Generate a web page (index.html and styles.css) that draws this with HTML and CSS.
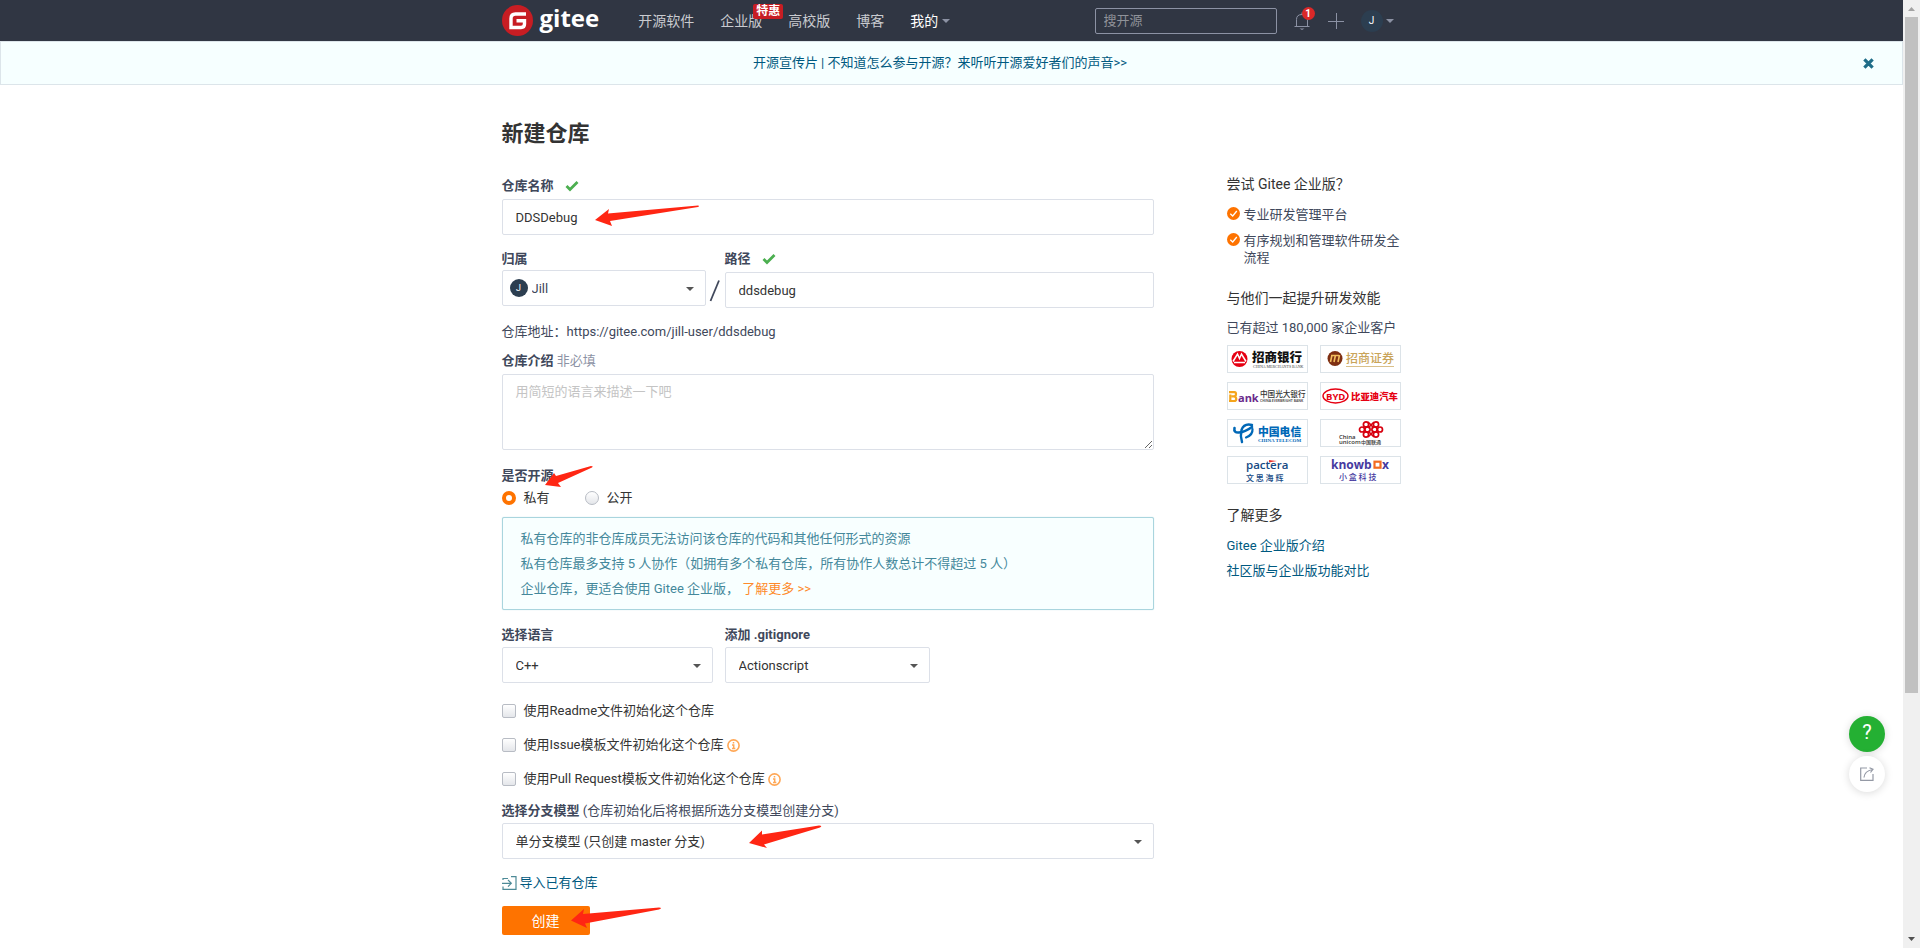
FILE: index.html
```
<!DOCTYPE html>
<html lang="zh-CN">
<head>
    <meta charset="UTF-8">
    <meta name="viewport" content="width=device-width, initial-scale=1.0">
    <title>新建仓库 - Gitee</title>
    <link rel="stylesheet" href="styles.css">
</head>
<body>
    <div class="page">
        <header class="navbar">
            <div class="container nav-inner">
                <a class="logo" href="#">
                    <svg width="31" height="31" viewBox="0 0 31 31">
                        <circle cx="15.5" cy="15.5" r="15.5" fill="#c71d23"/>
                        <path d="M24 9H13.5Q9 9 9 13.5V22.500H19Q22.500 22.500 22.500 19V15.700H14.500" fill="none" stroke="#fff" stroke-width="3.400"/>
                    </svg>
                    <span>gitee</span>
                </a>
                <nav class="nav-links">
                    <a href="#">开源软件</a>
                    <a class="promo" href="#">企业版<span class="promo-tag">特惠</span></a>
                    <a href="#">高校版</a>
                    <a href="#">博客</a>
                    <a class="mine" href="#">我的<i class="caret"></i></a>
                </nav>
                <div class="nav-tools">
                    <input class="search" type="text" placeholder="搜开源" aria-label="搜开源">
                    <a class="bell" href="#" aria-label="通知">
                        <svg width="16" height="20" viewBox="0 0 16 20" fill="none" stroke="#8c92a4">
                            <path d="M.5 15.500H15.500M2.500 15.500V8.500Q2.500 3.500 8 3.500Q13.500 3.500 13.500 8.500V15.500M8 3.500V1.500"/>
                            <path d="M5.500 17.500H10.500L8 19Z" fill="#8c92a4" stroke="none"/>
                        </svg>
                        <span class="bell-count">1</span>
                    </a>
                    <a class="plus" href="#" aria-label="新建">
                        <svg width="16" height="16" viewBox="0 0 16 16" stroke="#8c92a4"><path d="M8.500 0V16M0 8.500H16"/></svg>
                    </a>
                    <a class="user" href="#"><span class="avatar avatar-nav">J</span><i class="caret"></i></a>
                </div>
            </div>
        </header>

        <div class="notice">
            <a href="#">开源宣传片 | 不知道怎么参与开源？来听听开源爱好者们的声音&gt;&gt;</a>
            <button class="notice-close" type="button" aria-label="关闭">
                <svg width="11" height="11" viewBox="0 0 12 12" stroke="#1f6d88" stroke-width="3.500"><path d="M1.500 1.500L10.500 10.500M10.500 1.500L1.500 10.500"/></svg>
            </button>
        </div>

        <main class="container content">
            <form class="repo-form">
                <h1>新建仓库</h1>

                <div class="field name-field">
                    <label for="name">仓库名称
                        <svg class="check" width="14" height="12" viewBox="0 0 14 12"><path d="M1.500 6L5 9.500L12.500 2" fill="none" stroke="#4caf50" stroke-width="2.800"/></svg>
                    </label>
                    <input id="name" type="text" value="DDSDebug">
                </div>

                <div class="path-row">
                    <div class="field owner-field">
                        <label for="owner">归属</label>
                        <div class="select-box">
                            <span class="avatar avatar-owner">J</span>
                            <select id="owner"><option>Jill</option></select>
                        </div>
                    </div>
                    <svg class="slash" width="19" height="36" viewBox="0 0 19 36"><path d="M4.500 29L13 8.500" stroke="#40485b" stroke-width="1.800"/></svg>
                    <div class="field path-field">
                        <label for="path">路径
                            <svg class="check" width="14" height="12" viewBox="0 0 14 12"><path d="M1.500 6L5 9.500L12.500 2" fill="none" stroke="#4caf50" stroke-width="2.800"/></svg>
                        </label>
                        <input id="path" type="text" value="ddsdebug">
                    </div>
                </div>

                <p class="address">仓库地址：https://gitee.com/jill-user/ddsdebug</p>

                <div class="field desc-field">
                    <label for="desc">仓库介绍 <small>非必填</small></label>
                    <textarea id="desc" placeholder="用简短的语言来描述一下吧"></textarea>
                </div>

                <div class="visibility">
                    <strong>是否开源</strong>
                    <div class="radios">
                        <label><input type="radio" name="visibility" checked>私有</label>
                        <label><input type="radio" name="visibility">公开</label>
                    </div>
                </div>

                <div class="tips">
                    <p>私有仓库的非仓库成员无法访问该仓库的代码和其他任何形式的资源</p>
                    <p>私有仓库最多支持 5 人协作（如拥有多个私有仓库，所有协作人数总计不得超过 5 人）</p>
                    <p>企业仓库，更适合使用 Gitee 企业版， <a href="#">了解更多 &gt;&gt;</a></p>
                </div>

                <div class="lang-row">
                    <div class="field lang-field">
                        <label for="lang">选择语言</label>
                        <div class="select-box"><select id="lang"><option>C++</option></select></div>
                    </div>
                    <div class="field ignore-field">
                        <label for="ignore">添加 .gitignore</label>
                        <div class="select-box"><select id="ignore"><option>Actionscript</option></select></div>
                    </div>
                </div>

                <div class="checks">
                    <label><input type="checkbox">使用Readme文件初始化这个仓库</label>
                    <label><input type="checkbox">使用Issue模板文件初始化这个仓库
                        <svg class="info" width="13" height="13" viewBox="0 0 13 13"><circle cx="6.500" cy="6.500" r="5.600" fill="none" stroke="#ffa857" stroke-width="1.600"/><path d="M6.500 3V4.500M5 6H6.700V9.500M5 9.500H8.300" fill="none" stroke="#ffa857" stroke-width="1.500"/></svg>
                    </label>
                    <label><input type="checkbox">使用Pull Request模板文件初始化这个仓库
                        <svg class="info" width="13" height="13" viewBox="0 0 13 13"><circle cx="6.500" cy="6.500" r="5.600" fill="none" stroke="#ffa857" stroke-width="1.600"/><path d="M6.500 3V4.500M5 6H6.700V9.500M5 9.500H8.300" fill="none" stroke="#ffa857" stroke-width="1.500"/></svg>
                    </label>
                </div>

                <div class="field branch-field">
                    <label for="branch">选择分支模型 <span>(仓库初始化后将根据所选分支模型创建分支)</span></label>
                    <div class="select-box"><select id="branch"><option>单分支模型 (只创建 master 分支)</option></select></div>
                </div>

                <a class="import" href="#">
                    <svg width="15" height="14" viewBox="0 0 15 14" fill="none" stroke="#4d8a97" stroke-width="1.200"><path d="M1 4V2.500H6M9 .6H14V13.400H1V10.500M0 7.300H9M6 4L9.300 7.300L6 10.600"/></svg>
                    导入已有仓库
                </a>
                <button class="submit" type="submit">创建</button>
            </form>

            <aside class="sidebar">
                <h2>尝试 Gitee 企业版？</h2>
                <ul class="features">
                    <li><svg width="13" height="13" viewBox="0 0 13 13"><circle cx="6.500" cy="6.500" r="6.500" fill="#fe7300"/><path d="M3.300 6.800L5.700 9L9.800 4" fill="none" stroke="#fff" stroke-width="1.300"/></svg>专业研发管理平台</li>
                    <li><svg width="13" height="13" viewBox="0 0 13 13"><circle cx="6.500" cy="6.500" r="6.500" fill="#fe7300"/><path d="M3.300 6.800L5.700 9L9.800 4" fill="none" stroke="#fff" stroke-width="1.300"/></svg>有序规划和管理软件研发全流程</li>
                </ul>
                <h2>与他们一起提升研发效能</h2>
                <p>已有超过 180,000 家企业客户</p>
                <div class="customers">
                    <svg viewBox="0 0 79 26">
                        <circle cx="11.500" cy="13" r="8" fill="#e60012"/>
                        <path d="M5 15.500L9.500 8L11.500 12.500L13.500 8L18 15.500M6 16.500H17" fill="none" stroke="#fff" stroke-width="1.500"/>
                        <text class="cjk heavy" x="24" y="16" font-size="12.500" fill="#111">招商银行</text>
                        <text class="serif" x="25" y="22" font-size="4" fill="#444">CHINA MERCHANTS BANK</text>
                    </svg>
                    <svg viewBox="0 0 79 26">
                        <circle cx="14" cy="12.500" r="7.500" fill="#7e2f12"/>
                        <path d="M9.500 16L11 9M13 16L14.500 9M17 16L18.500 9M10 9.500H18" fill="none" stroke="#f2bd5e" stroke-width="1.600"/>
                        <text class="cjk" x="25" y="17" font-size="12" fill="#c9a45a">招商证券</text>
                        <path d="M25 20.500H73" stroke="#d9c08a"/>
                    </svg>
                    <svg viewBox="0 0 79 26">
                        <path d="M1 9.200H6.500Q8 9.200 8 11Q8 13.300 6 13.300H3.500M6 13.300Q8.300 14 8.300 16Q8.300 18 6 18H1M2.300 11.500V18" fill="none" stroke="#f5a51b" stroke-width="2.200"/>
                        <text class="latin" x="10" y="19" font-size="11" fill="#6b2a8c">ank</text>
                        <text class="cjk" x="32" y="14" font-size="7.600" fill="#333">中国光大银行</text>
                        <text class="latin" x="32" y="19" font-size="3.400" fill="#555">CHINA EVERBRIGHT BANK</text>
                    </svg>
                    <svg viewBox="0 0 79 26">
                        <ellipse cx="14.500" cy="13" rx="12.500" ry="7" fill="none" stroke="#e60012" stroke-width="1.400"/>
                        <text class="latin" x="5" y="16.500" font-size="9.500" fill="#e60012">BYD</text>
                        <text class="cjk heavy" x="30" y="16.500" font-size="9.400" fill="#e60012">比亚迪汽车</text>
                    </svg>
                    <svg viewBox="0 0 79 26">
                        <g fill="none" stroke="#0068b7" stroke-linecap="round">
                            <path d="M6.500 8Q5.500 13 11 12.500Q17 12 24 7" stroke-width="2.600"/>
                            <path d="M24 5Q16 3 13.500 10Q12 16 14 22" stroke-width="2.400"/>
                            <path d="M24.500 9Q25 15 18 17.500" stroke-width="2.200"/>
                        </g>
                        <text class="cjk heavy" x="30" y="15.500" font-size="10.800" fill="#0068b7">中国电信</text>
                        <text class="serif heavy" x="30" y="22" font-size="5" fill="#0068b7">CHINA TELECOM</text>
                    </svg>
                    <svg viewBox="0 0 79 26">
                        <g fill="none" stroke="#d7000f" stroke-width="1.700">
                            <circle cx="45" cy="4.500" r="2.600"/><circle cx="55" cy="4.500" r="2.600"/>
                            <circle cx="41" cy="9.500" r="2.500"/><circle cx="46.500" cy="9.500" r="2.600"/><circle cx="53.500" cy="9.500" r="2.600"/><circle cx="59" cy="9.500" r="2.500"/>
                            <circle cx="45" cy="14.500" r="2.600"/><circle cx="55" cy="14.500" r="2.600"/>
                            <path d="M47 2L53 8M53 2L47 8M47 11L53 17M53 11L47 17"/>
                        </g>
                        <text class="latin thin" x="18" y="18.500" font-size="6" fill="#333">China</text>
                        <text class="latin thin" x="18" y="24" font-size="6" fill="#333">unicom</text>
                        <text class="cjk" x="40" y="24" font-size="5" fill="#333">中国联通</text>
                    </svg>
                    <svg viewBox="0 0 79 26">
                        <text class="latin thin" x="18" y="12" font-size="11.500" fill="#164a84">pactera</text>
                        <path d="M41 3L49 4L41 5.500Z" fill="#e5322d"/>
                        <text class="cjk" x="18" y="23.500" font-size="8" fill="#164a84">文 思 海 辉</text>
                    </svg>
                    <svg viewBox="0 0 79 26">
                        <text class="latin" x="10" y="12" font-size="12" fill="#463aa0">knowb</text>
                        <rect x="53.500" y="4.700" width="6" height="6" fill="none" stroke="#f36b21" stroke-width="2.200"/>
                        <text class="latin" x="61" y="12" font-size="12" fill="#463aa0">x</text>
                        <text class="cjk" x="18" y="23" font-size="8" fill="#463aa0">小 盒 科 技</text>
                    </svg>
                </div>
                <h2>了解更多</h2>
                <a href="#">Gitee 企业版介绍</a>
                <a href="#">社区版与企业版功能对比</a>
            </aside>

            <!-- step arrows, drawn over the form -->
            <svg class="arrows" width="200" height="760" viewBox="0 0 200 760" fill="#ff2613">
                <path d="M93 35L107 24L106 28.500L196 20.500Q198 21 196 22L108 36L110 41Z"/>
                <path d="M43 300L52 288L54 291L89 281Q92 281 90 282.500L56 298L59 302Z"/>
                <path d="M247 658L260 645.500L260 649.500L317 640.500Q321 640.500 318 642.500L262 659.500L265 663Z"/>
                <path d="M69 735.500L82 724L81 729L157 722.500Q161 723 157 724.500L83 738.500L85 743Z"/>
            </svg>
        </main>

        <div class="float-tools">
            <button class="help" type="button">?</button>
            <button class="share" type="button" aria-label="反馈">
                <svg width="14" height="14" viewBox="0 0 14 14" fill="none" stroke="#9499a5" stroke-width="1.200"><path d="M7 1H.7V13.300H13V7M4 10.500Q4.500 4 12.500 2.500M9.500 .7L13 2.300L10.500 5.500"/></svg>
            </button>
        </div>
    </div>

    <div class="scrollbar">
        <svg width="17" height="17" viewBox="0 0 17 17"><path d="M5 11L8.500 7L12 11Z" fill="#a3a3a3"/></svg>
        <div class="scroll-track"><div class="scroll-thumb"></div></div>
        <svg width="17" height="17" viewBox="0 0 17 17"><path d="M5 6L8.500 10L12 6Z" fill="#505050"/></svg>
    </div>
</body>
</html>
```
FILE: styles.css
```
* {
    box-sizing: border-box;
}
body {
    display: flex;
    height: 100vh;
    margin: 0;
    overflow: hidden;
    font-family: Roboto, "Noto Sans CJK SC", sans-serif;
    font-size: 13px;
    line-height: 20px;
    color: #40485b;
    background: #fff;
}
h1, h2, p, ul {
    margin: 0;
    padding: 0;
}
a {
    color: #005980;
    text-decoration: none;
}
input, select, textarea, button {
    font-family: inherit;
    font-size: 13px;
}
svg {
    flex: none;
}
.page {
    position: relative;
    flex: 1;
    overflow: hidden;
}
.container {
    max-width: 900px;
    margin: 0 auto;
}

/* top bar */
.navbar {
    background: #303643;
}
.nav-inner {
    display: flex;
    align-items: center;
    height: 41px;
}
.logo {
    display: flex;
    align-items: center;
    gap: 7px;
    color: #fff;
    font-family: "Open Sans", sans-serif;
    font-size: 24px;
    font-weight: bold;
}
.logo span {
    padding-bottom: 6px;
}
.nav-links {
    display: flex;
    flex: 1;
    gap: 26px;
    margin-left: 39px;
    font-size: 14px;
}
.nav-links a {
    color: #c9cbd0;
}
.nav-links .mine {
    display: flex;
    align-items: center;
    gap: 4px;
    color: #fff;
}
.promo {
    position: relative;
}
.promo-tag {
    position: absolute;
    top: -7px;
    left: 33px;
    padding: 0 3px;
    border-radius: 2px;
    background: #c71d23;
    color: #fff;
    font-size: 12px;
    font-weight: bold;
    line-height: 15px;
    white-space: nowrap;
}
.caret {
    border: 4px solid transparent;
    border-top-color: #8c92a4;
    border-bottom: 0;
}
.nav-tools {
    display: flex;
    align-items: center;
}
.search {
    width: 182px;
    height: 26px;
    padding: 0 8px;
    border: 1px solid #8c92a4;
    border-radius: 2px;
    background: transparent;
    color: #fff;
}
.search::placeholder {
    color: #8f9299;
}
.bell {
    position: relative;
    display: flex;
    margin-left: 17px;
}
.bell-count {
    position: absolute;
    top: -4px;
    left: 8px;
    width: 13px;
    border-radius: 7px;
    background: #db2828;
    color: #fff;
    font-size: 10px;
    font-weight: bold;
    line-height: 13px;
    text-align: center;
}
.plus {
    display: flex;
    margin-left: 18px;
}
.user {
    display: flex;
    align-items: center;
    gap: 3px;
    margin: 0 8px 0 17px;
}
.avatar {
    border-radius: 50%;
    background: #2c3e50;
    color: #fff;
    font-size: 10px;
    text-align: center;
}
.avatar-nav {
    width: 22px;
    line-height: 22px;
}

/* announcement */
.notice {
    display: flex;
    align-items: center;
    height: 44px;
    padding: 0 28px;
    border: 1px solid #dce5ea;
    background: #f6ffff;
}
.notice a {
    flex: 1;
    padding-right: 12px;
    text-align: center;
}
.notice-close {
    display: flex;
    padding: 0;
    border: 0;
    background: none;
}

/* form */
.content {
    position: relative;
    display: flex;
    justify-content: space-between;
}
.repo-form {
    display: flex;
    flex-direction: column;
    width: 652px;
    padding: 33px 0;
}
h1 {
    color: #333;
    font-size: 22px;
    line-height: 32px;
}
.field {
    display: flex;
    flex-direction: column;
    gap: 3px;
}
.field label, .visibility strong {
    font-weight: bold;
}
.field label span, .field small {
    font-size: 13px;
    font-weight: normal;
}
.field small {
    color: #8c92a4;
}
.check {
    margin-left: 8px;
    vertical-align: -2px;
}
.field input, .field select, .field textarea {
    width: 100%;
    height: 36px;
    padding: 0 13px;
    border: 1px solid #dce0e8;
    border-radius: 2px;
    background: #fff;
    color: #333;
}
.name-field {
    margin-top: 26px;
}
.path-row {
    display: flex;
    margin-top: 14px;
}
.owner-field {
    width: 204px;
    gap: 1px;
}
.slash {
    margin-top: 23px;
}
.path-field {
    flex: 1;
}
.select-box {
    position: relative;
}
.select-box select {
    appearance: none;
}
.select-box::after {
    content: "";
    position: absolute;
    top: 17px;
    right: 12px;
    border: 4px solid transparent;
    border-top-color: #555;
    border-bottom: 0;
    pointer-events: none;
}
.owner-field select {
    padding-left: 29px;
    color: #40485b;
}
.avatar-owner {
    position: absolute;
    top: 9px;
    left: 8px;
    width: 18px;
    font-size: 9px;
    line-height: 18px;
}
.address {
    margin-top: 14px;
}
.desc-field {
    margin-top: 9px;
}
.field textarea {
    height: 76px;
    padding: 7px 13px;
    line-height: 20px;
}
.field textarea::placeholder {
    color: #c4c4c4;
}
.visibility {
    margin-top: 16px;
}
.radios {
    display: flex;
    gap: 35px;
    margin-top: 2px;
    color: #333;
}
.radios label, .checks label {
    display: flex;
    align-items: center;
}
.radios input, .checks input {
    appearance: none;
    width: 14px;
    height: 14px;
    margin: 0 8px 0 0;
    border: 1px solid #b8bcc4;
    background: linear-gradient(#fff, #e4e6ea);
}
.radios input {
    border-radius: 50%;
}
.radios input:checked {
    border: 4px solid #fe7300;
    background: #fff;
}
.tips {
    margin-top: 9px;
    padding: 8px 18px;
    border: 1px solid #a9d5de;
    border-radius: 2px;
    background: #f8ffff;
    color: #44889b;
    line-height: 25px;
    box-shadow: 0 0 1px #a9d5de;
}
.tips a {
    color: #fe8a2b;
}
.lang-row {
    display: flex;
    gap: 12px;
    margin-top: 15px;
}
.lang-row .field, .branch-field {
    gap: 2px;
}
.lang-field {
    width: 211px;
}
.ignore-field {
    width: 205px;
}
.checks {
    display: flex;
    flex-direction: column;
    gap: 14px;
    margin-top: 18px;
    color: #333;
}
.checks input {
    border-radius: 2px;
}
.info {
    margin-left: 3px;
}
.branch-field {
    margin-top: 12px;
}
.import {
    display: flex;
    align-items: center;
    gap: 3px;
    margin-top: 14px;
}
.submit {
    align-self: flex-start;
    width: 88px;
    height: 29px;
    margin-top: 13px;
    padding: 0 0 2px;
    border: 0;
    border-radius: 2px;
    background: #fe7300;
    color: #fff;
    font-size: 14px;
}
.arrows {
    position: absolute;
    top: 100px;
    left: 0;
    overflow: visible;
    pointer-events: none;
}

/* right column */
.sidebar {
    display: flex;
    flex-direction: column;
    width: 175px;
    padding: 89px 1px 0 0;
}
.sidebar h2 {
    color: #333;
    font-size: 14px;
    font-weight: normal;
}
.features {
    display: flex;
    flex-direction: column;
    gap: 9px;
    margin: 12px 0 22px;
    line-height: 17px;
    list-style: none;
}
.features li {
    display: flex;
    gap: 4px;
}
.features svg {
    margin-top: 1px;
}
.sidebar p {
    margin-top: 10px;
}
.customers {
    display: grid;
    grid-template-columns: 1fr 1fr;
    gap: 9px 12px;
    margin: 7px 0 21px;
}
.customers svg {
    width: 100%;
    height: 28px;
    border: 1px solid #dce3e8;
}
.customers .cjk {
    font-family: "Noto Sans CJK SC", sans-serif;
    font-weight: 500;
}
.customers .latin {
    font-family: "Open Sans", sans-serif;
    font-weight: bold;
}
.customers .serif {
    font-family: "Liberation Serif", serif;
}
.customers .heavy {
    font-weight: 900;
}
.customers .thin {
    font-weight: 600;
}
.sidebar > a {
    margin-top: 5px;
}
.sidebar h2 + a {
    margin-top: 11px;
}

/* floating buttons */
.float-tools {
    position: absolute;
    right: 18px;
    bottom: 156px;
    display: flex;
    flex-direction: column;
    gap: 4px;
}
.float-tools button {
    display: flex;
    align-items: center;
    justify-content: center;
    width: 36px;
    height: 36px;
    padding: 0;
    border: 0;
    border-radius: 50%;
    background: #fff;
    box-shadow: 0 1px 8px rgba(0, 0, 0, 0.15);
}
.float-tools .help {
    padding-bottom: 4px;
    background: #24b033;
    color: #fff;
    font-size: 20px;
}

/* scroll bar */
.scrollbar {
    display: flex;
    flex-direction: column;
    width: 17px;
    background: #f0f0f0;
}
.scroll-track {
    flex: 1;
    padding: 0 2px;
}
.scroll-thumb {
    height: 74%;
    background: #c1c1c1;
}
```
